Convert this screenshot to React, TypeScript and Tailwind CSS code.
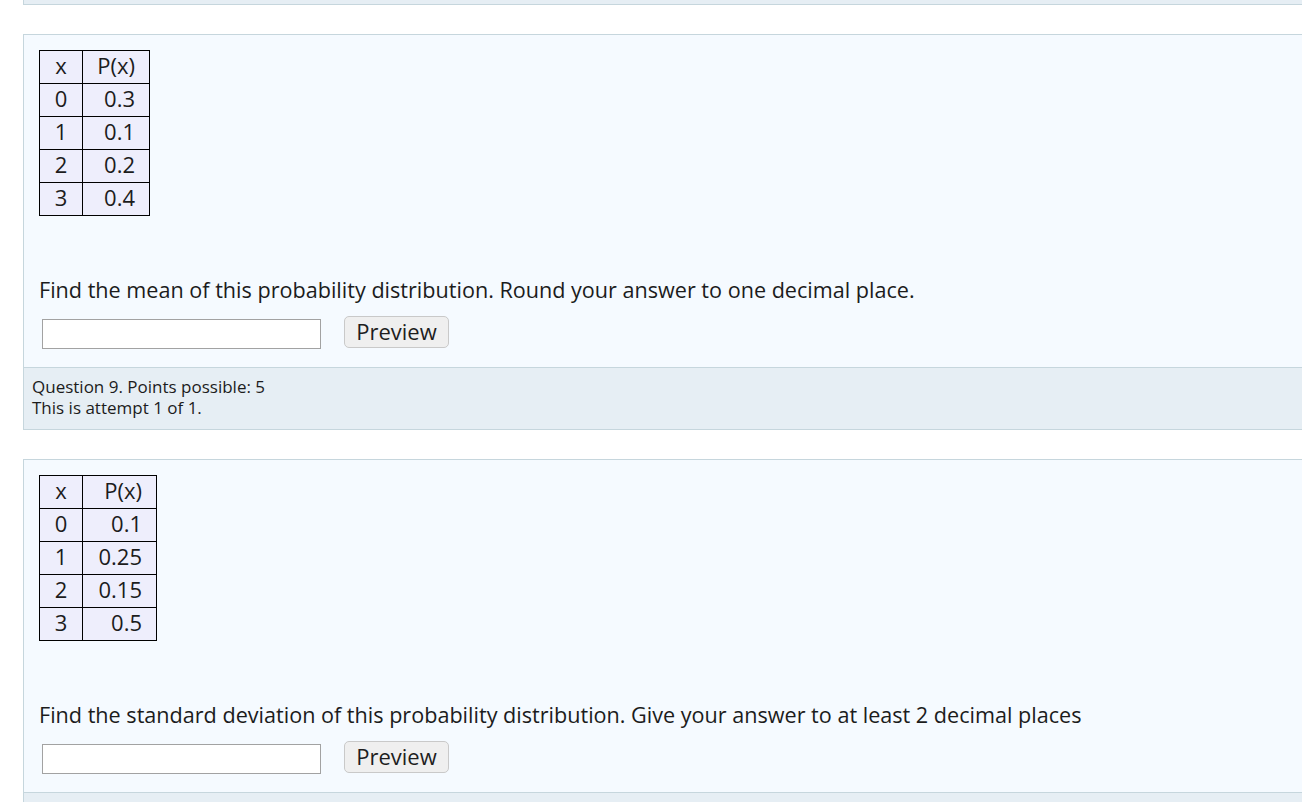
type Row = [string, string]

const questions: { rows: Row[]; prompt: string; info?: string[] }[] = [
  {
    rows: [
      ["0", "0.3"],
      ["1", "0.1"],
      ["2", "0.2"],
      ["3", "0.4"],
    ],
    prompt: "Find the mean of this probability distribution. Round your answer to one decimal place.",
    info: ["Question 9. Points possible: 5", "This is attempt 1 of 1."],
  },
  {
    rows: [
      ["0", "0.1"],
      ["1", "0.25"],
      ["2", "0.15"],
      ["3", "0.5"],
    ],
    prompt:
      "Find the standard deviation of this probability distribution. Give your answer to at least 2 decimal places",
  },
]

function DistTable({ rows, pw }: { rows: Row[]; pw: string }) {
  return (
    <table className="border-collapse bg-[#eeeefc] text-[22px] leading-[28px]">
      <tbody>
        <tr>
          <td className="h-[33px] w-[43px] border border-black p-0 pb-[4px] text-center">x</td>
          <td className={`h-[33px] border border-black p-0 pr-[14px] pb-[4px] text-right ${pw}`}>P(x)</td>
        </tr>
        {rows.map(([x, p]) => (
          <tr key={x}>
            <td className="h-[33px] border border-black p-0 pb-[4px] text-center">{x}</td>
            <td className="h-[33px] border border-black p-0 pr-[14px] pb-[4px] text-right">{p}</td>
          </tr>
        ))}
      </tbody>
    </table>
  )
}

function Question({ rows, prompt, wide }: { rows: Row[]; prompt: string; wide: boolean }) {
  return (
    <div className="border-t border-l border-[#c6d6dd] bg-[#f5faff] pt-[15px] pb-[18px] pl-[15px]">
      <DistTable rows={rows} pw={wide ? "w-[74px]" : "w-[67px]"} />
      <p className="mt-[60px] text-[21.6px] leading-[28px]">{prompt}</p>
      <div className="mt-[12px] flex items-start">
        <input
          type="text"
          className="mt-[3px] ml-[3px] h-[30px] w-[279px] border border-[#a2a2a2] bg-white outline-none"
        />
        <button className="ml-[23px] h-[32px] w-[105px] rounded-[5px] border border-[#c9c9c9] bg-[#efefef] pb-[3px] text-[22px] leading-[26px] text-[#1e1e1e]">
          Preview
        </button>
      </div>
    </div>
  )
}

function InfoStrip({ lines }: { lines: string[] }) {
  return (
    <div className="border-t border-b border-l border-[#c6d6dd] bg-[#e6eef4] pt-[8px] pb-[11px] pl-[8px] text-[17px] leading-[21px]">
      {lines.map((l) => (
        <div key={l}>{l}</div>
      ))}
    </div>
  )
}

export default function App() {
  return (
    <div
      className="h-[802px] w-[1302px] overflow-hidden bg-white text-[#1c1c1c]"
      style={{ fontFamily: '"Open Sans", "Liberation Sans", sans-serif' }}
    >
      <div className="ml-[23px] w-[1300px]">
        <div className="h-[5px] border-b border-l border-[#c6d6dd] bg-[#e6eef4]" />
        <div className="mt-[29px]">
          <Question rows={questions[0].rows} prompt={questions[0].prompt} wide={false} />
          <InfoStrip lines={questions[0].info!} />
        </div>
        <div className="mt-[29px]">
          <Question rows={questions[1].rows} prompt={questions[1].prompt} wide={true} />
          <div className="h-[20px] border-t border-l border-[#c6d6dd] bg-[#e6eef4]" />
        </div>
      </div>
    </div>
  )
}
